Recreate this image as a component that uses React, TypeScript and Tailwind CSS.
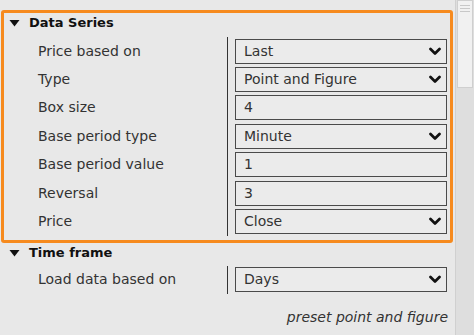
import React from "react";

type Row = { label: string; value: string; select?: boolean };

const dataSeries: Row[] = [
  { label: "Price based on", value: "Last", select: true },
  { label: "Type", value: "Point and Figure", select: true },
  { label: "Box size", value: "4" },
  { label: "Base period type", value: "Minute", select: true },
  { label: "Base period value", value: "1" },
  { label: "Reversal", value: "3" },
  { label: "Price", value: "Close", select: true },
];

const timeFrame: Row[] = [
  { label: "Load data based on", value: "Days", select: true },
];

function Chevron() {
  return (
    <svg width="12" height="9" viewBox="0 0 12 9" className="shrink-0">
      <path d="M1.5 2 L6 6.5 L10.5 2" fill="none" stroke="#111" strokeWidth="2.7" strokeLinecap="round" strokeLinejoin="round" />
    </svg>
  );
}

function Header({ title }: { title: string }) {
  return (
    <div className="flex items-center h-[18px] gap-[9px] pl-[5px]">
      <svg width="11" height="8" viewBox="0 0 11 8">
        <path d="M0.5 1 L10.5 1 L5.5 7.5 Z" fill="#111" />
      </svg>
      <span className="font-bold text-[13px] text-[#111]">{title}</span>
    </div>
  );
}

function Section({ rows }: { rows: Row[] }) {
  return (
    <div className="flex">
      <div className="w-[224px] border-r border-[#333] flex flex-col pl-[34px]">
        {rows.map((r) => (
          <div key={r.label} className="h-[28.4px] flex items-center text-[14px] text-[#333]">
            {r.label}
          </div>
        ))}
      </div>
      <div className="flex-1 flex flex-col pl-[7px] pr-[3px]">
        {rows.map((r) => (
          <div key={r.label} className="h-[28.4px] flex items-center">
            <div className="h-[25px] w-full border border-[#4a4a4a] bg-[#ebebeb] flex items-center justify-between pl-[8px] pr-[5px] text-[14px] text-[#333]">
              <span>{r.value}</span>
              {r.select ? <Chevron /> : null}
            </div>
          </div>
        ))}
      </div>
    </div>
  );
}

export default function App() {
  return (
    <div className="w-[474px] h-[335px] flex bg-[#e8e8e8] overflow-hidden" style={{ fontFamily: '"DejaVu Sans", sans-serif' }}>
      <div className="w-[455px] flex flex-col pt-[10px] pl-[1px] pr-[2px]">
        <div className="border-[3px] border-[#f68a1e] rounded-[3px] pt-[1px] pb-[4px]">
          <Header title="Data Series" />
          <div className="mt-[5px]">
            <Section rows={dataSeries} />
          </div>
        </div>
        <div className="pt-[1px]">
          <div className="pl-[3px]">
            <Header title="Time frame" />
          </div>
          <div className="mt-[4px] pl-[3px] pr-[3px]">
            <Section rows={timeFrame} />
          </div>
          <div className="text-right italic text-[14px] text-[#333] pr-[5px] mt-[13px]">
            preset point and figure
          </div>
        </div>
      </div>
      <div className="w-[19px] flex flex-col bg-[#dedede] border-l border-[#d0d0d0]">
        <div className="h-[88px] bg-[#f1f1f1] border border-[#cfcfcf] mx-[1px] flex flex-col items-center pt-[4px] gap-[2px]">
          <div className="w-[10px] h-px bg-[#c8c8c8]" />
          <div className="w-[10px] h-px bg-[#c8c8c8]" />
          <div className="w-[10px] h-px bg-[#c8c8c8]" />
        </div>
      </div>
    </div>
  );
}
